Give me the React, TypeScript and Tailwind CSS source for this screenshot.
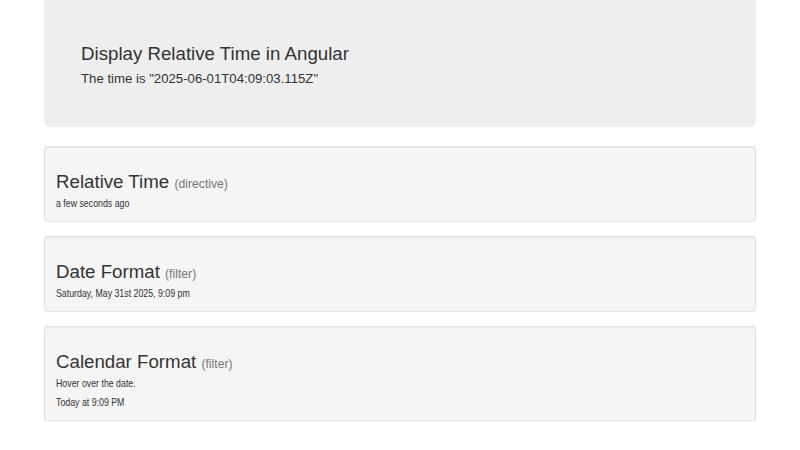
export default function App() {
  const font = { fontFamily: '"Liberation Sans", Arial, Helvetica, sans-serif' };
  return (
    <div className="min-h-[450px] w-[800px] bg-white text-[#333]" style={font}>
      <div className="mx-[44px] flex flex-col">
        {/* page header */}
        <div className="h-[127px] rounded-b-[5px] bg-[#eeeeee] px-[37px] pt-[44px]">
          <h3 className="text-[18.7px] leading-[20.6px]">Display Relative Time in Angular</h3>
          <p className="mt-[5px] text-[13.2px] leading-[18px]">
            The time is "2025-06-01T04:09:03.115Z"
          </p>
        </div>

        <div className="mt-[19px] flex flex-col gap-[14px]">
          <Well title="Relative Time" tag="(directive)" lines={["a few seconds ago"]} />
          <Well title="Date Format" tag="(filter)" lines={["Saturday, May 31st 2025, 9:09 pm"]} />
          <Well title="Calendar Format" tag="(filter)" lines={["Hover over the date.", "Today at 9:09 PM"]} />
        </div>
      </div>
    </div>
  );
}

function Well({ title, tag, lines }: { title: string; tag: string; lines: string[] }) {
  return (
    <div className="rounded-[3px] border border-[#e3e3e3] bg-[#f5f5f5] px-[11px] pt-[24px] pb-[10px] shadow-[inset_0_1px_1px_rgba(0,0,0,0.05)]">
      <h3 className="h-[21px] text-[18.7px] leading-[21px]">
        {title} <small className="text-[12.2px] text-[#777]">{tag}</small>
      </h3>
      <div className="mt-[3px] flex flex-col gap-[3px]">
        {lines.map((l) => (
          // narrow set body text
          <span
            key={l}
            className="block h-[16px] origin-left scale-x-[0.83] whitespace-nowrap text-[10.6px] leading-[16px]"
          >
            {l}
          </span>
        ))}
      </div>
    </div>
  );
}
